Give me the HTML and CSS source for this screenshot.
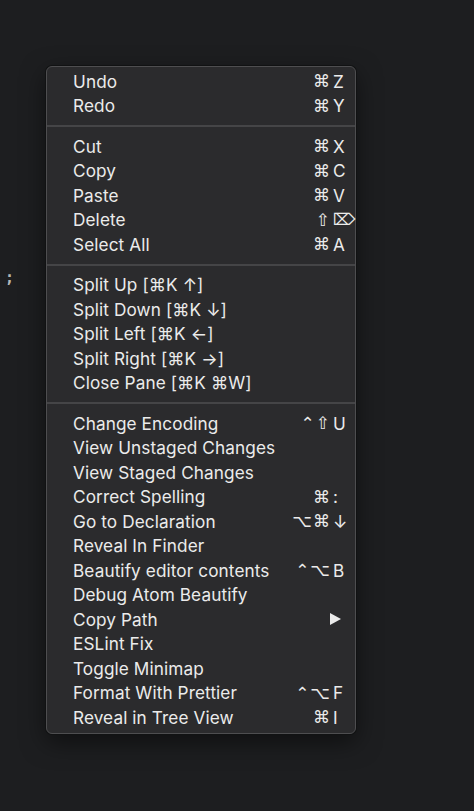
FILE: index.html
```html
<!DOCTYPE html>
<html>
<head>
<meta charset="utf-8">
<link rel="stylesheet" href="styles.css">
</head>
<body>
<div class="editor">
  <div class="gutter"><span class="code">;</span></div>
  <div class="menu">
    <div class="row"><span class="label">Undo</span><span class="sc"><span class="mod">⌘</span><span class="key">Z</span></span></div>
    <div class="row"><span class="label">Redo</span><span class="sc"><span class="mod">⌘</span><span class="key">Y</span></span></div>
    <div class="sep"></div>
    <div class="row"><span class="label">Cut</span><span class="sc"><span class="mod">⌘</span><span class="key">X</span></span></div>
    <div class="row"><span class="label">Copy</span><span class="sc"><span class="mod">⌘</span><span class="key">C</span></span></div>
    <div class="row"><span class="label">Paste</span><span class="sc"><span class="mod">⌘</span><span class="key">V</span></span></div>
    <div class="row"><span class="label">Delete</span><span class="sc"><span class="mod">⇧</span><span class="key sym">⌦</span></span></div>
    <div class="row"><span class="label">Select All</span><span class="sc"><span class="mod">⌘</span><span class="key">A</span></span></div>
    <div class="sep"></div>
    <div class="row"><span class="label">Split Up [⌘K ↑]</span></div>
    <div class="row"><span class="label">Split Down [⌘K ↓]</span></div>
    <div class="row"><span class="label">Split Left [⌘K ←]</span></div>
    <div class="row"><span class="label">Split Right [⌘K →]</span></div>
    <div class="row"><span class="label">Close Pane [⌘K ⌘W]</span></div>
    <div class="sep"></div>
    <div class="row"><span class="label">Change Encoding</span><span class="sc"><span class="mod">⌃⇧</span><span class="key">U</span></span></div>
    <div class="row"><span class="label">View Unstaged Changes</span></div>
    <div class="row"><span class="label">View Staged Changes</span></div>
    <div class="row"><span class="label">Correct Spelling</span><span class="sc"><span class="mod">⌘</span><span class="key">:</span></span></div>
    <div class="row"><span class="label">Go to Declaration</span><span class="sc"><span class="mod">⌥⌘</span><span class="key">↓</span></span></div>
    <div class="row"><span class="label">Reveal In Finder</span></div>
    <div class="row"><span class="label">Beautify editor contents</span><span class="sc"><span class="mod">⌃⌥</span><span class="key">B</span></span></div>
    <div class="row"><span class="label">Debug Atom Beautify</span></div>
    <div class="row"><span class="label">Copy Path</span><span class="sc"><span class="arrow"></span></span></div>
    <div class="row"><span class="label">ESLint Fix</span></div>
    <div class="row"><span class="label">Toggle Minimap</span></div>
    <div class="row"><span class="label">Format With Prettier</span><span class="sc"><span class="mod">⌃⌥</span><span class="key">F</span></span></div>
    <div class="row"><span class="label">Reveal in Tree View</span><span class="sc"><span class="mod">⌘</span><span class="key">I</span></span></div>
  </div>
</div>
</body>
</html>
```

FILE: styles.css
```css
html, body {
  margin: 0;
  padding: 0;
  background: #1d1e20;
  height: 100%;
}
body {
  font-family: Inter, "Noto Sans", "DejaVu Sans", sans-serif;
  color: #ebebeb;
}
.editor {
  display: flex;
  padding-top: 66px;
}
.gutter {
  width: 46px;
  flex: none;
}
.code {
  display: block;
  margin-top: 203px;
  padding-left: 5px;
  font-family: "DejaVu Sans Mono", monospace;
  font-size: 15px;
  font-weight: bold;
  color: #b8b8b8;
}
.menu {
  width: 308px;
  background: #2b2b2d;
  border: 1px solid #4e4e50;
  border-radius: 6px;
  box-shadow: 0 0 0 1px #111213, 0 8px 24px rgba(0,0,0,0.5);
  padding: 2px 0 3px;
  display: flex;
  flex-direction: column;
}
.row {
  height: 24.5px;
  display: flex;
  align-items: center;
  justify-content: space-between;
  padding: 0 8px 0 26px;
  font-size: 17.2px;
  letter-spacing: 0.1px;
  white-space: nowrap;
}
.sep {
  height: 2px;
  margin: 7px 0;
  background: #454547;
}
.sc {
  display: flex;
  align-items: center;
}
.mod {
  font-family: "DejaVu Sans", Inter, sans-serif;
  font-size: 17px;
  text-align: right;
  letter-spacing: 1px;
}
.key {
  width: 14px;
  margin-left: 2px;
  text-align: left;
}
.key.sym {
  font-family: "DejaVu Sans", sans-serif;
  font-size: 16px;
}
.arrow {
  width: 0;
  height: 0;
  border-left: 11px solid #ebebeb;
  border-top: 6.5px solid transparent;
  border-bottom: 6.5px solid transparent;
  margin-right: 6px;
}
```
